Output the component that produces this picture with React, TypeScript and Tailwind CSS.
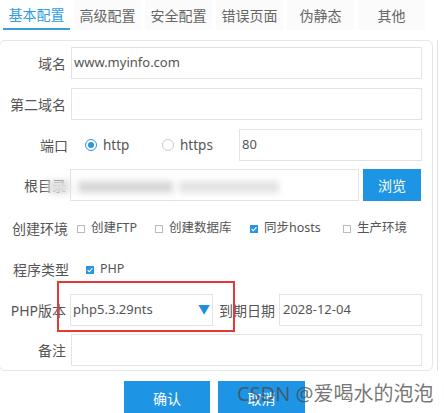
import React from 'react';

const font = { fontFamily: '"Noto Sans", "Noto Sans CJK SC", sans-serif' };

const tabs = ['基本配置', '高级配置', '安全配置', '错误页面', '伪静态', '其他'];

function Label({ children, className = '' }: { children: React.ReactNode; className?: string }) {
  return <div className={`w-[66px] shrink-0 text-right text-[14px] text-[#555] ${className}`}>{children}</div>;
}

function Box({ children, className = '' }: { children?: React.ReactNode; className?: string }) {
  return (
    <div className={`flex h-[32px] shrink-0 items-center border border-[#e3e3e3] bg-white px-[2px] text-[13px] text-[#555] ${className}`}>
      {children}
    </div>
  );
}

function Check({ on, label, className = '' }: { on?: boolean; label: string; className?: string }) {
  return (
    <div className={`flex shrink-0 items-center gap-[6px] ${className}`}>
      {on ? (
        <span className="flex h-[8px] w-[8px] items-center justify-center bg-[#2a95e5]">
          <svg viewBox="0 0 8 8" className="h-[8px] w-[8px]">
            <path d="M1.6 4.1 L3.3 5.7 L6.4 2.3" fill="none" stroke="white" strokeWidth="1.1" />
          </svg>
        </span>
      ) : (
        <span className="h-[8px] w-[8px] border border-[#bbb] bg-white" />
      )}
      <span className="text-[12.5px] text-[#555]">{label}</span>
    </div>
  );
}

export default function App() {
  return (
    <div className="relative h-[413px] w-[444px] overflow-hidden bg-white" style={font}>
      {/* Tabs */}
      <div className="flex gap-[4px] pl-[3px]">
        {tabs.map((t, i) => (
          <div
            key={t}
            className={`flex h-[30px] w-[67px] items-center justify-center text-[14px] ${
              i === 0 ? 'border-b-2 border-[#3a9de0] bg-white text-[#2e9ce6]' : 'bg-[#fbfbfb] text-[#666]'
            }`}
          >
            {t}
          </div>
        ))}
      </div>

      <div className="mt-[10px] flex">
        {/* Panel */}
        <div className="ml-[-1px] h-[331px] w-[434px] rounded-[6px] border border-[#e6e6e6] pt-[6px]">
          {/* 域名 */}
          <div className="flex items-center">
            <Label>域名</Label>
            <Box className="ml-[5px] w-[351px]">www.myinfo.com</Box>
          </div>
          {/* 第二域名 */}
          <div className="mt-[9px] flex items-center">
            <Label>第二域名</Label>
            <Box className="ml-[5px] w-[351px]" />
          </div>
          {/* 端口 */}
          <div className="mt-[9px] flex items-center">
            <Label className="w-[68px]">端口</Label>
            <div className="ml-[17px] flex w-[77px] shrink-0 items-center gap-[6px]">
              <span className="flex h-[12px] w-[12px] items-center justify-center rounded-full border border-[#2a95e5]">
                <span className="h-[6px] w-[6px] rounded-full bg-[#2a95e5]" />
              </span>
              <span className="text-[13.5px] text-[#555]">http</span>
            </div>
            <div className="flex w-[77px] shrink-0 items-center gap-[6px]">
              <span className="h-[12px] w-[12px] rounded-full border border-[#ccc]" />
              <span className="text-[13.5px] text-[#555]">https</span>
            </div>
            <Box className="w-[183px]">80</Box>
          </div>
          {/* 根目录 */}
          <div className="mt-[8px] flex items-center">
            <Label>根目录</Label>
            <Box className="ml-[4px] w-[289px]" />
            <div className="ml-[4px] flex h-[32px] w-[58px] items-center justify-center bg-[#1e95e4] text-[14px] text-white">
              浏览
            </div>
          </div>
          {/* 创建环境 */}
          <div className="mt-[17px] flex items-center">
            <Label className="w-[68px]">创建环境</Label>
            <div className="ml-[9px] flex items-center">
              <Check className="w-[78px]" label="创建FTP" />
              <Check className="w-[95px]" label="创建数据库" />
              <Check className="w-[93px]" on label="同步hosts" />
              <Check label="生产环境" />
            </div>
          </div>
          {/* 程序类型 */}
          <div className="mt-[20px] flex items-center">
            <Label className="w-[69px]">程序类型</Label>
            <div className="ml-[17px]">
              <Check on label="PHP" />
            </div>
          </div>
          {/* PHP版本 */}
          <div className="mt-[14px] flex items-center">
            <Label className="w-[65px]">PHP版本</Label>
            <Box className="ml-[4px] w-[143px] justify-between pr-[2px]">
              <span>php5.3.29nts</span>
              <span className="text-[12px] text-[#1e8fe0]">▼</span>
            </Box>
            <div className="ml-[6px] w-[55px] shrink-0 whitespace-nowrap text-[14px] text-[#555]">到期日期</div>
            <Box className="ml-[5px] w-[143px] pl-[3px]">2028-12-04</Box>
          </div>
          {/* 备注 */}
          <div className="mt-[8px] flex items-center">
            <Label>备注</Label>
            <Box className="ml-[5px] w-[351px]" />
          </div>
        </div>
        <div className="ml-[4px] h-[331px] w-px bg-[#e2e2e2]" />
      </div>

      {/* Buttons */}
      <div className="mt-[10px] flex gap-[8px] pl-[124px]">
        <div className="flex h-[34px] w-[86px] items-center justify-center bg-[#1e95e4] text-[14px] text-white">确认</div>
        <div className="flex h-[34px] w-[87px] items-center justify-center bg-[#1e95e4] text-[14px] text-white">取消</div>
      </div>

      {/* blurred path */}
      <div className="absolute left-[48px] top-[176px] flex h-[22px] w-[245px] items-center overflow-hidden blur-[3px]">
        <div className="h-[14px] w-[22px] bg-[#e0e0e0]" />
        <div className="ml-[8px] h-[12px] w-[95px] bg-[#d8d8d8]" />
        <div className="ml-[6px] h-[12px] w-[100px] bg-[#e3e3e3]" />
      </div>

      {/* red highlight */}
      <div className="absolute left-[57px] top-[281px] h-[51px] w-[178px] border-2 border-[#e53935]" />

      {/* watermark */}
      <div className="absolute left-[237px] top-[380px] text-[20px] leading-[28px] text-[#4a4a4a]/75">CSDN @爱喝水的泡泡</div>
    </div>
  );
}
